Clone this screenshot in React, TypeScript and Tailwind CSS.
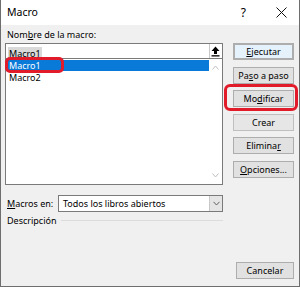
import React from 'react'

const font = { fontFamily: '"Noto Sans", "Liberation Sans", sans-serif' }

function Btn({ children, className = '' }: { children: React.ReactNode; className?: string }) {
  return (
    <div
      className={`h-[17px] flex items-center justify-center whitespace-nowrap border border-[#adadad] bg-[#e1e1e1] text-[9px] leading-none text-black ${className}`}
    >
      {children}
    </div>
  )
}

function UpIcon() {
  return (
    <svg width="9" height="11" viewBox="0 0 9 11">
      <path d="M4.5 0.5 L8.5 5 H6 V8 H3 V5 H0.5 Z" fill="#000" />
      <rect x="0.5" y="9.2" width="8" height="1.3" fill="#000" />
    </svg>
  )
}

export default function App() {
  return (
    <div
      className="w-[300px] h-[287px] flex flex-col bg-[#f0f0f0] border-l border-r border-b border-[#6e6e6e] overflow-hidden select-none whitespace-nowrap"
      style={font}
    >
      {/* title bar */}
      <div className="h-[25px] bg-white flex items-center pl-[6px] pr-[12px] text-[10.5px] text-black">
        <span className="flex-1">Macro</span>
        <span className="mr-[30px] text-[12px]">?</span>
        <svg width="11" height="11" viewBox="0 0 11 11">
          <path d="M0.5 0.5 L10.5 10.5 M10.5 0.5 L0.5 10.5" stroke="#111" strokeWidth="1" />
        </svg>
      </div>

      {/* body */}
      <div className="flex-1 flex pl-[4px] pr-[5px]">
        {/* left column */}
        <div className="w-[218px] flex flex-col">
          <div className="h-[18px] pt-[5px] text-[9px] leading-[10px] text-black pl-[2px]">
            Nom<span className="underline">b</span>re de la macro:
          </div>
          {/* input */}
          <div className="h-[16px] bg-white border border-[#7a7a7a] flex items-center">
            <div className="flex-1 pl-[2px]">
              <span className="bg-[#d9d9d9] px-[1px] text-[9px] leading-[11px] text-black">Macro1</span>
            </div>
            <div className="w-[12px] h-[14px] flex items-center justify-center border-l border-[#c8c8c8] mr-[1px]">
              <UpIcon />
            </div>
          </div>
          {/* list */}
          <div className="relative h-[126px] bg-white border border-t-0 border-[#7a7a7a] flex">
            <div className="flex-1 flex flex-col pt-[1px] pl-[1px]">
              <div className="h-[11px] bg-[#0a7ad8] text-white text-[9px] leading-[11px] pl-[2px]">Macro1</div>
              <div className="h-[13px] text-black text-[9px] leading-[13px] pl-[2px]">Macro2</div>
            </div>
            <div className="w-[13px] flex flex-col items-center justify-between py-[6px]">
              <svg width="7" height="5" viewBox="0 0 7 5">
                <path d="M0.5 4.5 L3.5 1 L6.5 4.5" stroke="#c0c0c0" fill="none" strokeWidth="1" />
              </svg>
              <svg width="7" height="5" viewBox="0 0 7 5">
                <path d="M0.5 0.5 L3.5 4 L6.5 0.5" stroke="#c0c0c0" fill="none" strokeWidth="1" />
              </svg>
            </div>
            <div className="absolute left-[-1px] top-[-2px] w-[59px] h-[16px] border-[3px] border-[#e11b2a] rounded-[5px]" />
          </div>

          {/* Macros en */}
          <div className="mt-[10px] flex items-center h-[17px]">
            <span className="w-[53px] pl-[2px] text-[9px] leading-none text-black">
              <span className="underline">M</span>acros en:
            </span>
            <div className="flex-1 h-[17px] bg-white border border-[#7a7a7a] flex items-center">
              <span className="flex-1 pl-[4px] text-[9px] leading-none text-black">Todos los libros abiertos</span>
              <div className="w-[13px] h-full bg-[#e5e5e5] border-l border-[#c8c8c8] flex items-center justify-center">
                <svg width="7" height="5" viewBox="0 0 7 5">
                  <path d="M0.5 0.8 L3.5 4 L6.5 0.8" stroke="#606060" fill="none" strokeWidth="1" />
                </svg>
              </div>
            </div>
          </div>
          <div className="mt-[1px] flex items-center h-[14px]">
            <span className="pl-[2px] text-[9px] leading-none text-black">Descripción</span>
            <div className="flex-1 ml-[4px] border-t border-[#dcdcdc]" />
          </div>
        </div>

        {/* right column */}
        <div className="flex-1 flex flex-col items-end">
          <div className="w-[61px] mt-[18px] flex flex-col gap-[6.6px]">
            <Btn className="border-[#0078d7] border-2 bg-[#e5f1fb]">
              <span className="underline">E</span>jecutar
            </Btn>
            <Btn className="border-[#5aa0e0]">
              Pa<span className="underline">s</span>o a paso
            </Btn>
            <div className="relative">
              <Btn>
                Mo<span className="underline">d</span>ificar
              </Btn>
              <div className="absolute left-[-9px] right-[-4px] top-[-6px] bottom-[-4px] border-[3px] border-[#e11b2a] rounded-[6px]" />
            </div>
            <Btn className="border-[#bfbfbf] bg-[#e6e6e6] text-[#8c8c8c]">Crear</Btn>
            <Btn>
              Elimina<span className="underline">r</span>
            </Btn>
            <Btn>
              <span className="underline">O</span>pciones...
            </Btn>
          </div>
          <div className="flex-1" />
          <Btn className="w-[58px] mb-[7px]">Cancelar</Btn>
        </div>
      </div>
    </div>
  )
}
